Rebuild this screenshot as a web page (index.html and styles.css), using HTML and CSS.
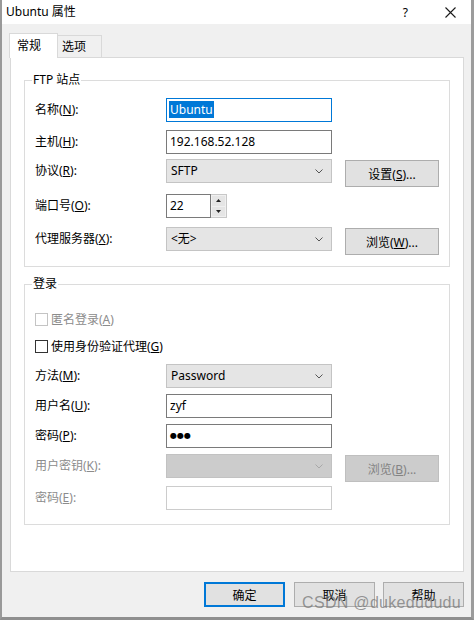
FILE: index.html
```html
<!DOCTYPE html>
<html>
<head>
  <title>Ubuntu 属性</title>
  <link rel="stylesheet" href="styles.css">
</head>
<body>
  <div class="window">
    <!-- 标题栏 -->
    <div class="titlebar">
      <span class="title">Ubuntu 属性</span>
      <span class="help">?</span>
      <span class="close">
        <svg width="11" height="11" viewBox="0 0 11 11"><path d="M0.5 0.5L10.5 10.5M10.5 0.5L0.5 10.5" stroke="#1a1a1a" stroke-width="1.1" fill="none"/></svg>
      </span>
    </div>

    <div class="body">
      <!-- 标签页 -->
      <div class="tabs">
        <div class="tab active">常规</div>
        <div class="tab">选项</div>
      </div>

      <div class="panel">
        <fieldset class="group group-ftp">
          <legend>FTP 站点</legend>

          <div class="row">
            <label class="lbl">名称(<u>N</u>):</label>
            <div class="field input focus"><span class="sel">Ubuntu</span></div>
          </div>

          <div class="row r-host">
            <label class="lbl">主机(<u>H</u>):</label>
            <div class="field input">192.168.52.128</div>
          </div>

          <div class="row r-proto">
            <label class="lbl">协议(<u>R</u>):</label>
            <div class="field select">SFTP
              <svg class="chev" width="8" height="5" viewBox="0 0 8 5"><path d="M0.5 0.5L4 4L7.5 0.5" stroke="#555" fill="none"/></svg>
            </div>
            <button class="btn side">设置(<u>S</u>)...</button>
          </div>

          <div class="row r-port">
            <label class="lbl">端口号(<u>O</u>):</label>
            <div class="field input port">22</div>
            <div class="spin">
              <div class="spin-half"><svg width="5" height="3" viewBox="0 0 5 3"><path d="M0 3L2.5 0L5 3Z" fill="#222"/></svg></div>
              <div class="spin-half"><svg width="5" height="3" viewBox="0 0 5 3"><path d="M0 0L2.5 3L5 0Z" fill="#222"/></svg></div>
            </div>
          </div>

          <div class="row r-proxy">
            <label class="lbl">代理服务器(<u>X</u>):</label>
            <div class="field select">&lt;无&gt;
              <svg class="chev" width="8" height="5" viewBox="0 0 8 5"><path d="M0.5 0.5L4 4L7.5 0.5" stroke="#555" fill="none"/></svg>
            </div>
            <button class="btn side">浏览(<u>W</u>)...</button>
          </div>
        </fieldset>

        <fieldset class="group group-login">
          <legend>登录</legend>

          <div class="row check disabled">
            <span class="box"></span>匿名登录(<u>A</u>)
          </div>

          <div class="row check r-agent">
            <span class="box"></span>使用身份验证代理(<u>G</u>)
          </div>

          <div class="row r-method">
            <label class="lbl">方法(<u>M</u>):</label>
            <div class="field select">Password
              <svg class="chev" width="8" height="5" viewBox="0 0 8 5"><path d="M0.5 0.5L4 4L7.5 0.5" stroke="#555" fill="none"/></svg>
            </div>
          </div>

          <div class="row r-next">
            <label class="lbl">用户名(<u>U</u>):</label>
            <div class="field input">zyf</div>
          </div>

          <div class="row r-next">
            <label class="lbl">密码(<u>P</u>):</label>
            <div class="field input dots">●●●</div>
          </div>

          <div class="row r-next">
            <label class="lbl off">用户密钥(<u>K</u>):</label>
            <div class="field select off">
              <svg class="chev" width="8" height="5" viewBox="0 0 8 5"><path d="M0.5 0.5L4 4L7.5 0.5" stroke="#a8a8a8" fill="none"/></svg>
            </div>
            <button class="btn side off">浏览(<u>B</u>)...</button>
          </div>

          <div class="row r-last">
            <label class="lbl off">密码(<u>E</u>):</label>
            <div class="field input off"></div>
          </div>
        </fieldset>
      </div>

      <!-- 底部按钮 -->
      <div class="actions">
        <button class="btn act default">确定</button>
        <button class="btn act">取消</button>
        <button class="btn act">帮助</button>
      </div>

      <div class="watermark">CSDN @dukedududu</div>
    </div>
  </div>
</body>
</html>
```

FILE: styles.css
```css
/* 对话框 */
html, body {
  margin: 0;
  padding: 0;
  background: #fff;
}

body {
  font-family: "Noto Sans", "Noto Sans CJK SC", sans-serif;
  font-size: 12px;
  color: #000;
}

.window {
  width: 474px;
  height: 620px;
  box-sizing: border-box;
  border-left: 2px solid #999;
  border-right: 3px solid #9c9c9c;
  border-bottom: 3px solid #8f8f8f;
  display: flex;
  flex-direction: column;
}

.titlebar {
  height: 24px;
  background: #fff;
  display: flex;
  align-items: center;
  padding-left: 4px;
}

.title {
  font-size: 12px;
  line-height: 24px;
}

.help {
  margin-left: auto;
  font-size: 12px;
  margin-right: 37px;
}

.close {
  display: flex;
  margin-right: 15px;
}

.body {
  flex: 1;
  background: #f0f0f0;
  padding: 9px 7px 0 8px;
  position: relative;
}

/* 标签页 */
.tabs {
  height: 24px;
  display: flex;
  align-items: flex-end;
}

.tab {
  height: 22px;
  box-sizing: border-box;
  border: 1px solid #d9d9d9;
  border-bottom: none;
  background: #f0f0f0;
  padding: 2px 15px 0 4px;
  line-height: 18px;
}

.tab.active {
  height: 25px;
  margin-left: -1px;
  margin-bottom: -1px;
  background: #fff;
  padding: 3px 16px 0 7px;
  position: relative;
  z-index: 1;
}

.tab + .tab {
  border-left: none;
}

.panel {
  height: 515px;
  box-sizing: border-box;
  border: 1px solid #d9d9d9;
  background: #fff;
  padding: 14px 13px 0 13px;
}

/* 分组框 */
.group {
  margin: 0;
  border: 1px solid #dcdcdc;
  padding: 10px 10px 15px 10px;
}

.group legend {
  line-height: 16px;
  padding: 0 1px;
  margin-left: -3px;
}

.group-login {
  margin-top: 9px;
  padding-top: 15px;
  padding-bottom: 14px;
}

.row {
  display: flex;
  align-items: flex-start;
  height: 24px;
}

.r-host { margin-top: 8px; }
.r-proto { margin-top: 5px; }
.r-port { margin-top: 11px; }
.r-proxy { margin-top: 9px; }
.r-agent { margin-top: 3px; }
.r-method { margin-top: 6px; }
.r-next { margin-top: 6px; }
.r-last { margin-top: 8px; }

.lbl {
  width: 131px;
  line-height: 24px;
  flex: none;
}

.lbl.off {
  color: #8c8c8c;
}

.field {
  width: 166px;
  height: 24px;
  box-sizing: border-box;
  line-height: 22px;
  padding-left: 3px;
  flex: none;
  position: relative;
}

.input {
  border: 1px solid #7a7a7a;
  background: #fff;
}

.input.focus {
  border-color: #0078d7;
}

.input.off {
  border-color: #cccccc;
}

.sel {
  background: #0078d7;
  color: #fff;
  display: inline-block;
  line-height: 17px;
  padding: 0 1px;
  margin-left: -1px;
}

.input.port {
  width: 45px;
}

.dots {
  font-size: 8px;
  letter-spacing: 0;
  font-family: "DejaVu Sans", sans-serif;
}

.select {
  border: 1px solid #c4c4c4;
  background: #e5e5e5;
  padding-left: 4px;
}

.select.off {
  background: #cccccc;
  border-color: #c2c2c2;
}

.chev {
  position: absolute;
  right: 8px;
  top: 9px;
}

.spin {
  width: 16px;
  height: 24px;
  margin-left: 0;
  box-sizing: border-box;
  border: 1px solid #c8c8c8;
  border-left: none;
  background: #f0f0f0;
  display: flex;
  flex-direction: column;
  padding: 1px;
  gap: 1px;
}

.spin-half {
  flex: 1;
  background: #e5e5e5;
  display: flex;
  align-items: center;
  justify-content: center;
}

/* 按钮 */
.btn {
  font-family: inherit;
  font-size: 12px;
  background: #e1e1e1;
  border: 1px solid #adadad;
  color: #000;
  padding: 0;
  box-sizing: border-box;
}

.btn.side {
  width: 94px;
  height: 27px;
  margin-left: 13px;
  margin-top: 1px;
}

.btn.off {
  background: #cccccc;
  border-color: #bfbfbf;
  color: #838383;
  margin-top: 1px;
}

/* 复选框 */
.check {
  align-items: center;
}

.box {
  width: 13px;
  height: 13px;
  box-sizing: border-box;
  border: 1px solid #333;
  background: #fff;
  margin-right: 3px;
}

.check.disabled {
  color: #8c8c8c;
}

.check.disabled .box {
  border-color: #c4c4c4;
}

.actions {
  display: flex;
  justify-content: flex-end;
  margin-top: 10px;
  gap: 9px;
}

.btn.act {
  width: 81px;
  height: 25px;
}

.btn.act + .btn.act + .btn.act {
  margin-left: -1px;
}

.btn.default {
  border: 2px solid #0078d7;
}

.watermark {
  position: absolute;
  right: 10px;
  bottom: 5px;
  font-family: "Liberation Sans", "Noto Sans", sans-serif;
  font-size: 16px;
  color: rgba(120, 120, 120, 0.75);
  letter-spacing: 0.3px;
}
```
